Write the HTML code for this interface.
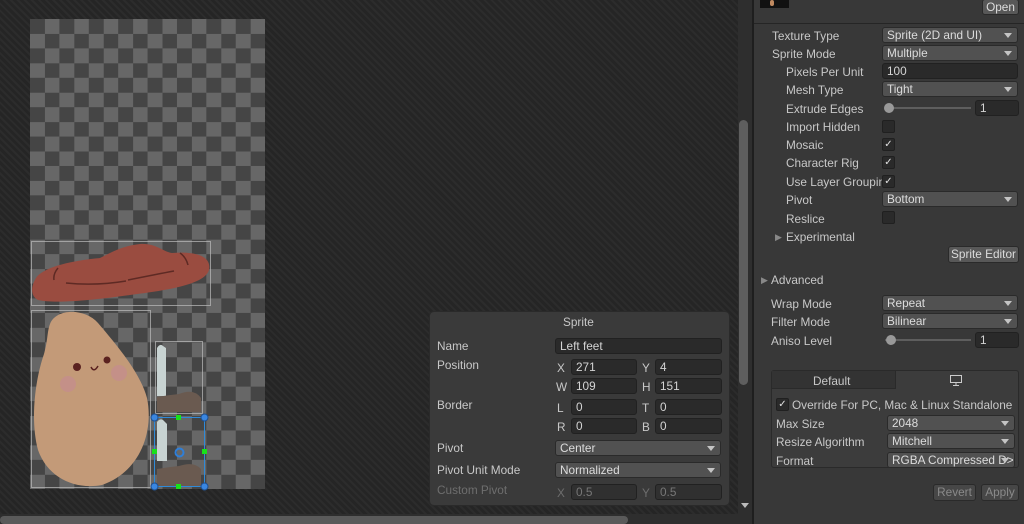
<!DOCTYPE html>
<html><head><meta charset="utf-8"><style>
*{box-sizing:border-box;margin:0;padding:0}
body{width:1024px;height:524px;overflow:hidden;background:#282828;font-family:"Liberation Sans",sans-serif;font-size:11.8px;color:#c8c8c8;position:relative}
.a{position:absolute}
.scene{left:0;top:0;width:738px;height:514px;background:repeating-linear-gradient(45deg,#2c2c2c 0 2px,#252525 2px 5px)}
.chk{left:30px;top:19px;width:235px;height:470px;background:conic-gradient(#676767 25%,#454545 0 50%,#676767 0 75%,#454545 0);background-size:29.4px 29.4px}
.ins{left:754px;top:0;width:270px;height:524px;background:#383838}
.lb{position:absolute;white-space:nowrap;line-height:14px}
.dd{position:absolute;height:16px;background:#515151;border:1px solid #2a2a2a;border-radius:3px;padding-left:4px;line-height:14px;color:#dcdcdc;white-space:nowrap;overflow:hidden}
.dd:after{content:"";position:absolute;right:5px;top:5px;border:4px solid transparent;border-top:5px solid #c4c4c4;border-bottom:0}
.tf{position:absolute;height:16px;background:#2a2a2a;border:1px solid #212121;border-radius:3px;padding-left:4px;line-height:14px;color:#d4d4d4;white-space:nowrap}
.cb{position:absolute;width:13px;height:13px;background:#2a2a2a;border:1px solid #202020;border-radius:2px;color:#e0e0e0;font-size:10px;line-height:11px;text-align:center}
.btn{position:absolute;height:17px;background:#585858;border-radius:3px;border:1px solid #2a2a2a;text-align:center;line-height:15px;color:#dcdcdc}
.sl{position:absolute;height:2px;background:#5e5e5e}
.kn{position:absolute;width:10px;height:10px;border-radius:50%;background:#999}
</style></head><body>
<div class="a scene"></div>
<div class="a chk"></div>
<svg class="a" style="left:0;top:0" width="740" height="524">
 <rect x="31.5" y="241.5" width="179" height="64" fill="none" stroke="#bdbdbd" stroke-opacity=".7"/>
 <path d="M36 278 C45 265 80 260 100 258 C112 252 122 246 140 244 C156 243 163 252 172 253 C195 251 212 256 209 270 C205 284 170 290 130 295 C95 300 55 304 38 300 C30 296 31 286 36 278Z" fill="#9a4c40"/>
 <path d="M58 268 q-5 6 -4 12 M180 253 q6 4 8 12 M66 283 q30 3 60 -2 M128 280 q30 -6 46 -9" stroke="#5e2a24" stroke-width="1.5" fill="none"/>
 <rect x="31.5" y="310.5" width="119" height="177" fill="none" stroke="#bdbdbd" stroke-opacity=".7"/>
 <path d="M50 324 C56 308 85 308 98 323 C115 343 140 372 147 398 C154 432 140 472 102 485 C75 490 48 478 38 450 C30 420 35 380 44 354 C48 340 47 332 50 324Z" fill="#c39a78"/>
 <circle cx="68" cy="384" r="8" fill="#c48a92" opacity=".6"/><circle cx="119" cy="373" r="8" fill="#c48a92" opacity=".6"/>
 <circle cx="77" cy="367" r="4" fill="#5a2220"/><circle cx="107" cy="360" r="3.5" fill="#5a2220"/>
 <path d="M91 367 q3 6 7 -1" stroke="#5a2220" stroke-width="1.5" fill="none"/>
 <rect x="155.5" y="341.5" width="47" height="72" fill="none" stroke="#bdbdbd" stroke-opacity=".7"/>
 <path d="M157 348 q3 -5 6 -2 l3 2 v48 h-9z" fill="#c8d3d2"/>
 <path d="M157 397 q12 -2 22 -3 q15 -6 22 4 v14 h-44z" fill="#6a5a50"/>
 <path d="M157 422 q3 -4 6 -2 l4 4 v37 h-10z" fill="#c8d3d2"/>
 <path d="M157 469 q12 -2 22 -3 q15 -5 22 3 v17 h-44z" fill="#6a5a50"/>
 <rect x="154.5" y="417.5" width="50" height="69" fill="none" stroke="#2f8ad8"/>
 <g fill="#3a86e0" stroke="#1e4f90"><circle cx="154.5" cy="417.5" r="3.5"/><circle cx="204.5" cy="417.5" r="3.5"/><circle cx="154.5" cy="486.5" r="3.5"/><circle cx="204.5" cy="486.5" r="3.5"/></g>
 <g fill="#19e019"><rect x="176" y="415" width="5" height="5"/><rect x="176" y="484" width="5" height="5"/><rect x="152" y="449" width="5" height="5"/><rect x="202" y="449" width="5" height="5"/></g>
 <circle cx="179.5" cy="452.5" r="4" fill="none" stroke="#2f7fd8" stroke-width="2"/>
</svg>
<div class="a" style="left:738px;top:0;width:14px;height:524px;background:#2e2e2e"></div>
<div class="a" style="left:739px;top:120px;width:9px;height:265px;background:#5e5e5e;border-radius:5px"></div>
<div class="a" style="left:741px;top:503px;border:4px solid transparent;border-top:5px solid #bbb"></div>
<div class="a" style="left:0;top:514px;width:738px;height:10px;background:#2e2e2e"></div>
<div class="a" style="left:0;top:516px;width:628px;height:8px;background:#5a5a5a;border-radius:4px"></div>
<div class="a" style="left:752px;top:0;width:2px;height:524px;background:#1e1e1e"></div>
<div class="a" style="left:429px;top:311px;width:301px;height:195px;background:#3a3a3a;border:1px solid #2a2a2a;border-radius:5px"></div>
<div class="lb" style="left:563px;top:315px">Sprite</div>
<div class="lb" style="left:437px;top:339px">Name</div>
<div class="tf" style="left:555px;top:338px;width:167px">Left feet</div>
<div class="lb" style="left:437px;top:358px">Position</div>
<div class="lb" style="left:557px;top:361px">X</div><div class="tf" style="left:571px;top:359px;width:66px">271</div>
<div class="lb" style="left:642px;top:361px">Y</div><div class="tf" style="left:655px;top:359px;width:67px">4</div>
<div class="lb" style="left:556px;top:380px">W</div><div class="tf" style="left:571px;top:378px;width:66px">109</div>
<div class="lb" style="left:642px;top:380px">H</div><div class="tf" style="left:655px;top:378px;width:67px">151</div>
<div class="lb" style="left:437px;top:398px">Border</div>
<div class="lb" style="left:557px;top:401px">L</div><div class="tf" style="left:571px;top:399px;width:66px">0</div>
<div class="lb" style="left:642px;top:401px">T</div><div class="tf" style="left:655px;top:399px;width:67px">0</div>
<div class="lb" style="left:557px;top:420px">R</div><div class="tf" style="left:571px;top:418px;width:66px">0</div>
<div class="lb" style="left:642px;top:420px">B</div><div class="tf" style="left:655px;top:418px;width:67px">0</div>
<div class="lb" style="left:437px;top:441px">Pivot</div>
<div class="dd" style="left:555px;top:440px;width:166px">Center</div>
<div class="lb" style="left:437px;top:463px">Pivot Unit Mode</div>
<div class="dd" style="left:555px;top:462px;width:166px">Normalized</div>
<div class="lb" style="left:437px;top:483px;color:#6e6e6e">Custom Pivot</div>
<div class="lb" style="left:557px;top:486px;color:#6e6e6e">X</div><div class="tf" style="left:571px;top:484px;width:66px;color:#777;background:#303030">0.5</div>
<div class="lb" style="left:642px;top:486px;color:#6e6e6e">Y</div><div class="tf" style="left:655px;top:484px;width:67px;color:#777;background:#303030">0.5</div>
<div class="a ins"></div>
<div class="a" style="left:760px;top:0;width:29px;height:8px;background:#111"></div>
<div class="a" style="left:770px;top:0;width:4px;height:6px;background:#c08a60;border-radius:2px"></div>
<div class="btn" style="left:982px;top:-1px;width:37px;height:16px">Open</div>
<div class="a" style="left:754px;top:23px;width:270px;height:1px;background:#252525"></div>
<div class="lb" style="left:772px;top:29px">Texture Type</div><div class="dd" style="left:882px;top:27px;width:136px">Sprite (2D and UI)</div>
<div class="lb" style="left:772px;top:47px">Sprite Mode</div><div class="dd" style="left:882px;top:45px;width:136px">Multiple</div>
<div class="lb" style="left:786px;top:65px">Pixels Per Unit</div><div class="tf" style="left:882px;top:63px;width:136px">100</div>
<div class="lb" style="left:786px;top:83px">Mesh Type</div><div class="dd" style="left:882px;top:81px;width:136px">Tight</div>
<div class="lb" style="left:786px;top:102px">Extrude Edges</div><div class="sl" style="left:885px;top:107px;width:86px"></div><div class="kn" style="left:884px;top:103px"></div><div class="tf" style="left:975px;top:100px;width:44px">1</div>
<div class="lb" style="left:786px;top:120px">Import Hidden</div><div class="cb" style="left:882px;top:120px"></div>
<div class="lb" style="left:786px;top:138px">Mosaic</div><div class="cb" style="left:882px;top:138px">✓</div>
<div class="lb" style="left:786px;top:156px">Character Rig</div><div class="cb" style="left:882px;top:156px">✓</div>
<div class="lb" style="left:786px;top:175px">Use Layer Groupin</div><div class="cb" style="left:882px;top:175px">✓</div>
<div class="lb" style="left:786px;top:193px">Pivot</div><div class="dd" style="left:882px;top:191px;width:136px">Bottom</div>
<div class="lb" style="left:786px;top:212px">Reslice</div><div class="cb" style="left:882px;top:211px"></div>
<div class="lb" style="left:775px;top:230px;color:#888;font-size:9px">▶</div><div class="lb" style="left:786px;top:230px">Experimental</div>
<div class="btn" style="left:948px;top:246px;width:71px">Sprite Editor</div>
<div class="lb" style="left:761px;top:273px;color:#888;font-size:9px">▶</div><div class="lb" style="left:771px;top:273px">Advanced</div>
<div class="lb" style="left:771px;top:297px">Wrap Mode</div><div class="dd" style="left:882px;top:295px;width:136px">Repeat</div>
<div class="lb" style="left:771px;top:315px">Filter Mode</div><div class="dd" style="left:882px;top:313px;width:136px">Bilinear</div>
<div class="lb" style="left:771px;top:334px">Aniso Level</div><div class="sl" style="left:885px;top:339px;width:86px"></div><div class="kn" style="left:886px;top:335px"></div><div class="tf" style="left:975px;top:332px;width:44px">1</div>
<div class="a" style="left:771px;top:370px;width:248px;height:98px;background:#3c3c3c;border:1px solid #2a2a2a;border-radius:3px"></div>
<div class="a" style="left:772px;top:371px;width:124px;height:18px;background:#333;border-right:1px solid #2a2a2a;border-bottom:1px solid #2a2a2a"></div>
<div class="lb" style="left:813px;top:374px">Default</div>
<svg class="a" style="left:949px;top:374px" width="14" height="12"><rect x="1.5" y="1.5" width="11" height="7" fill="none" stroke="#ccc"/><path d="M7 9v2M4 11.5h6" stroke="#ccc"/></svg>
<div class="cb" style="left:776px;top:398px">✓</div>
<div class="lb" style="left:792px;top:398px">Override For PC, Mac &amp; Linux Standalone</div>
<div class="lb" style="left:776px;top:417px">Max Size</div><div class="dd" style="left:887px;top:415px;width:128px">2048</div>
<div class="lb" style="left:776px;top:435px">Resize Algorithm</div><div class="dd" style="left:887px;top:433px;width:128px">Mitchell</div>
<div class="lb" style="left:776px;top:454px">Format</div><div class="dd" style="left:887px;top:452px;width:128px">RGBA Compressed D&gt;</div>
<div class="btn" style="left:933px;top:484px;width:43px;background:#474747;color:#8a8a8a">Revert</div>
<div class="btn" style="left:981px;top:484px;width:38px;background:#474747;color:#8a8a8a">Apply</div>
</body></html>
